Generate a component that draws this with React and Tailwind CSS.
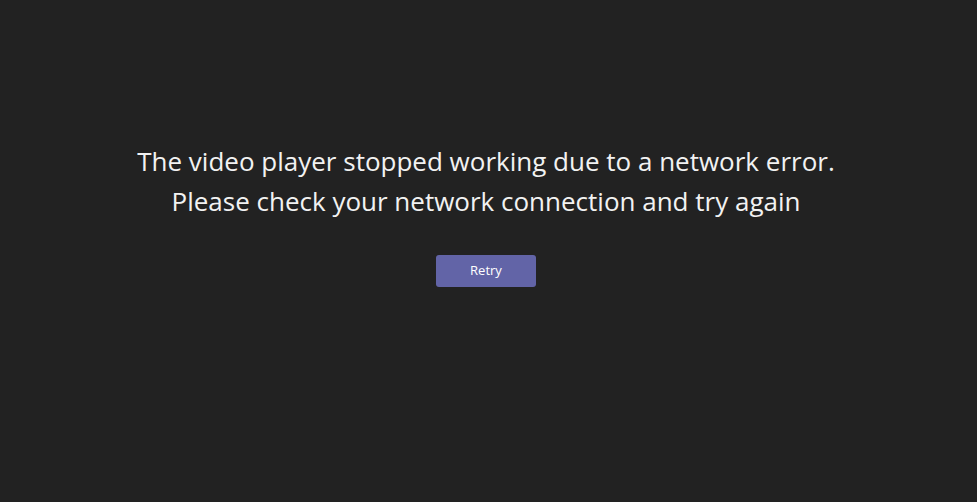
export default function App() {
  return (
    <div className="flex h-screen w-full flex-col items-center bg-[#222222] pt-[141px] pr-[5px] font-['Open_Sans',sans-serif]">
      <div className="text-center text-[26px] leading-[40px] text-[#f2f2f2]">
        <p>The video player stopped working due to a network error.</p>
        <p>Please check your network connection and try again</p>
      </div>
      <button className="mt-[34px] h-[32px] w-[100px] rounded-[3px] bg-[#6264a7] text-[13px] text-white">
        Retry
      </button>
    </div>
  );
}
